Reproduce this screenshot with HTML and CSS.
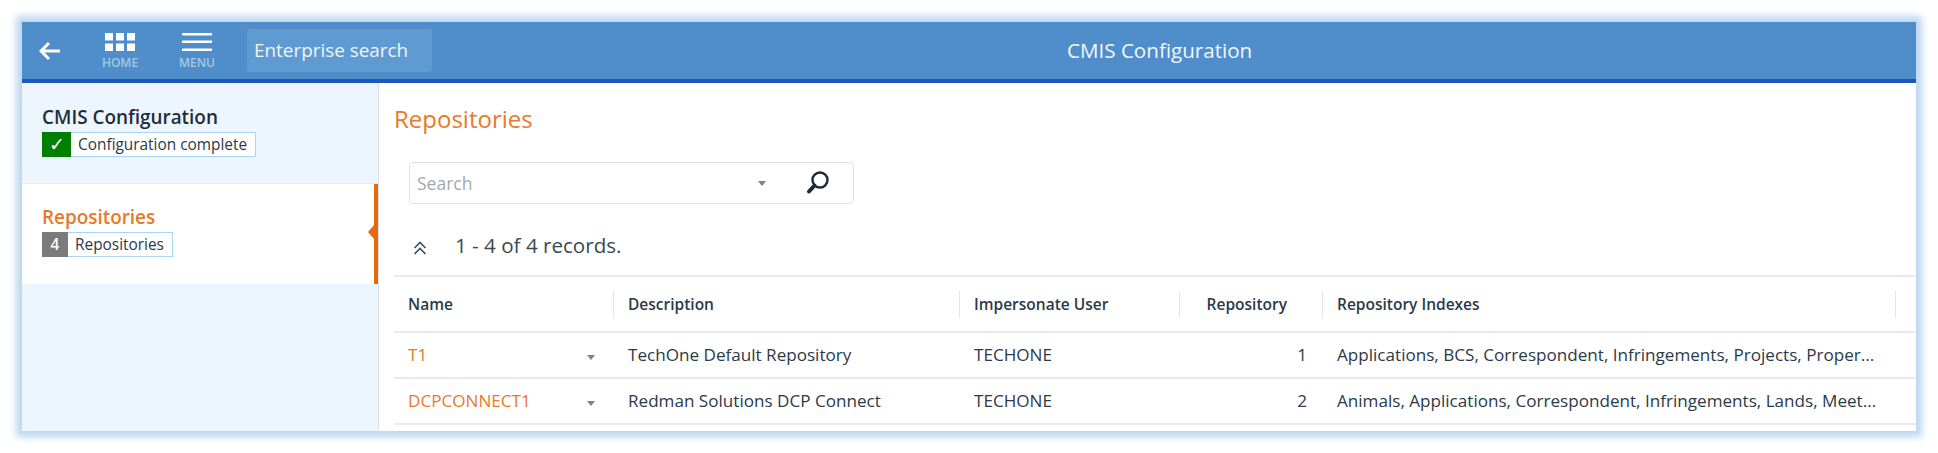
FILE: index.html
```html
<!DOCTYPE html>
<html lang="en">
<head>
<meta charset="utf-8">
<title>CMIS Configuration</title>
<link rel="stylesheet" href="styles.css">
</head>
<body>
<div class="window">
  <header class="topbar">
    <button class="back" aria-label="Back">
      <svg width="24" height="20" viewBox="0 0 24 20"><path d="M22 10H4M11 2l-8 8 8 8" fill="none" stroke="#fff" stroke-width="3"/></svg>
    </button>
    <div class="navitem home">
      <svg width="30" height="18" viewBox="0 0 30 18" fill="#fff"><rect width="8" height="7.500"/><rect x="11" width="8" height="7.500"/><rect x="22" width="8" height="7.500"/><rect y="10.500" width="8" height="7.500"/><rect x="11" y="10.500" width="8" height="7.500"/><rect x="22" y="10.500" width="8" height="7.500"/></svg>
      <span>HOME</span>
    </div>
    <div class="navitem menu">
      <svg width="30" height="18" viewBox="0 0 30 18" fill="#fff"><rect width="30" height="2.500"/><rect y="7.500" width="30" height="2.500"/><rect y="15.500" width="30" height="2.500"/></svg>
      <span>MENU</span>
    </div>
    <div class="enterprise">Enterprise search</div>
    <div class="apptitle">CMIS Configuration</div>
  </header>
  <div class="body">
    <aside class="sidebar">
      <div class="sideitem first">
        <h2>CMIS Configuration</h2>
        <div class="badge"><span class="mark ok">✓</span><span class="label">Configuration complete</span></div>
      </div>
      <div class="sideitem active">
        <h2>Repositories</h2>
        <div class="badge"><span class="mark count">4</span><span class="label">Repositories</span></div>
      </div>
    </aside>
    <main class="content">
      <h1>Repositories</h1>
      <div class="searchbox">
        <span class="placeholder">Search</span>
        <span class="caret big"></span>
        <svg class="lens" width="26" height="26" viewBox="0 0 26 26"><circle cx="15" cy="10" r="7.500" fill="none" stroke="#1c2a33" stroke-width="2.400"/><path d="M9.500 15.500L4 21.500" stroke="#1c2a33" stroke-width="4" stroke-linecap="round"/></svg>
      </div>
      <div class="records">
        <svg width="16" height="16" viewBox="0 0 16 16"><path d="M2.500 8L8 2.500 13.500 8M2.500 14L8 8.500 13.500 14" fill="none" stroke="#3b5166" stroke-width="1.700"/></svg>
        <span>1 - 4 of 4 records.</span>
      </div>
      <table class="grid">
        <colgroup><col class="c1"><col class="c2"><col class="c3"><col class="c4"><col class="c5"><col></colgroup>
        <thead>
          <tr><th><span>Name</span></th><th><span>Description</span></th><th><span>Impersonate User</span></th><th class="num"><span>Repository</span></th><th><span>Repository Indexes</span></th><th></th></tr>
        </thead>
        <tbody>
          <tr><td class="namecell"><a>T1</a><span class="caret"></span></td><td>TechOne Default Repository</td><td>TECHONE</td><td class="num">1</td><td colspan="2">Applications, BCS, Correspondent, Infringements, Projects, Proper...</td></tr>
          <tr><td class="namecell"><a>DCPCONNECT1</a><span class="caret"></span></td><td>Redman Solutions DCP Connect</td><td>TECHONE</td><td class="num">2</td><td colspan="2">Animals, Applications, Correspondent, Infringements, Lands, Meet...</td></tr>
        </tbody>
      </table>
    </main>
  </div>
</div>
</body>
</html>
```
FILE: styles.css
```css
* { box-sizing: border-box; }
html, body { margin: 0; height: 100%; background: #fff; overflow: hidden; }
body { padding: 22px; font-family: "Open Sans", "Noto Sans", sans-serif; color: #2b3a47; }
.window { width: 1894px; height: 409px; display: flex; flex-direction: column; background: #fff; box-shadow: 0 0 7px 6px #bdd7f0; overflow: hidden; }
.topbar { height: 61px; flex: none; display: flex; align-items: center; background: #4f8ecb; border-bottom: 4px solid #1c57bd; position: relative; padding-left: 16px; color: #fff; }
.back { width: 24px; height: 20px; padding: 0; border: 0; background: none; display: flex; margin-right: 33px; }
.navitem { display: flex; flex-direction: column; align-items: center; width: 50px; padding-top: 2px; gap: 4px; margin-right: 27px; }
.navitem span { font-size: 12px; line-height: 15px; font-weight: 600; color: #a5c8e8; }
.enterprise { width: 185px; height: 43px; margin-left: -2px; padding-left: 7px; background: #5f9ad2; border-radius: 4px; font-size: 18.900px; line-height: 43px; color: #eef5fb; }
.apptitle { position: absolute; left: 1045px; top: 0; line-height: 57px; font-size: 20.600px; color: #f2f7fc; }
.body { flex: 1; display: flex; min-height: 0; }
.sidebar { width: 357px; flex: none; background: #edf5fe; border-right: 1px solid #d5e0ec; }
.sideitem { padding: 22px 20px 0; height: 101px; }
.sideitem.first { height: 101px; }
.sideitem h2 { margin: 0; font-size: 18.900px; line-height: 24px; font-weight: 600; color: #1f2d3a; }
.sideitem.active { background: #fff; position: relative; width: 356px; height: 100px; padding-top: 21px; border-right: 4px solid #e56b0a; box-shadow: 0 -1px 0 #e3ebf3; }
.sideitem.active::after { content: ""; position: absolute; right: 0; top: 41px; border: 7px solid transparent; border-right: 6px solid #e56b0a; border-left: 0; }
.sideitem.active h2 { color: #e8792b; }
.badge { display: inline-flex; height: 25px; margin-top: 3px; border: 1px solid #a9d3f7; background: #fff; font-size: 15.400px; line-height: 23px; color: #2b3a47; vertical-align: top; }
.mark { margin: -1px 0 -1px -1px; color: #fff; text-align: center; line-height: 25px; }
.mark.ok { width: 29px; background: #008000; font-size: 19px; }
.mark.count { width: 26px; background: #7b7b7b; font-weight: 600; }
.label { padding: 0 8px 0 7px; }
.content { flex: 1; min-width: 0; padding-left: 15px; }
.content h1 { margin: 0; padding-top: 21px; font-size: 24px; line-height: 30px; font-weight: 400; color: #e8792b; }
.searchbox { width: 445px; height: 42px; margin: 28px 0 0 15px; display: flex; align-items: center; padding-left: 7px; background: #fff; border: 1px solid #e0e3e6; border-radius: 4px; }
.placeholder { font-size: 17.500px; color: #a3a9b0; flex: 1; }
.caret { display: inline-block; width: 0; height: 0; border: 4px solid transparent; border-top: 5px solid #7a828a; border-bottom: 0; }
.caret.big { margin-right: 39px; }
.lens { margin-right: 22px; }
.records { height: 60px; margin-left: 18px; display: flex; align-items: center; gap: 27px; font-size: 20.600px; color: #3a4854; margin-top: 11px; }
.records svg { margin-top: 6px; }
.grid { width: 1522px; table-layout: fixed; border-collapse: collapse; border-top: 2px solid #e9ebed; }
.c1 { width: 219px; } .c2 { width: 346px; } .c3 { width: 220px; } .c4 { width: 143px; } .c5 { width: 573px; }
th { height: 56px; padding: 0; text-align: left; font-size: 15.500px; font-weight: 600; color: #2b3a47; border-bottom: 2px solid #e9ebed; position: relative; }
th > span { padding-left: 15px; display: block; }
th:first-child > span { padding-left: 14px; }
th + th::before { content: ""; position: absolute; left: 0; top: 14px; height: 27px; border-left: 1px solid #e3e6e9; }
td { height: 46px; padding: 0 0 1px 15px; font-size: 17.100px; color: #2b3a47; border-bottom: 2px solid #e9ebed; white-space: nowrap; overflow: hidden; }
td.namecell { position: relative; padding-left: 14px; }
.namecell a { color: #e8792b; }
.namecell .caret { position: absolute; right: 18px; top: 22px; }
th.num { text-align: right; } th.num > span { padding-right: 35px; padding-left: 0; }
td.num { text-align: right; padding-right: 15px; }
```
